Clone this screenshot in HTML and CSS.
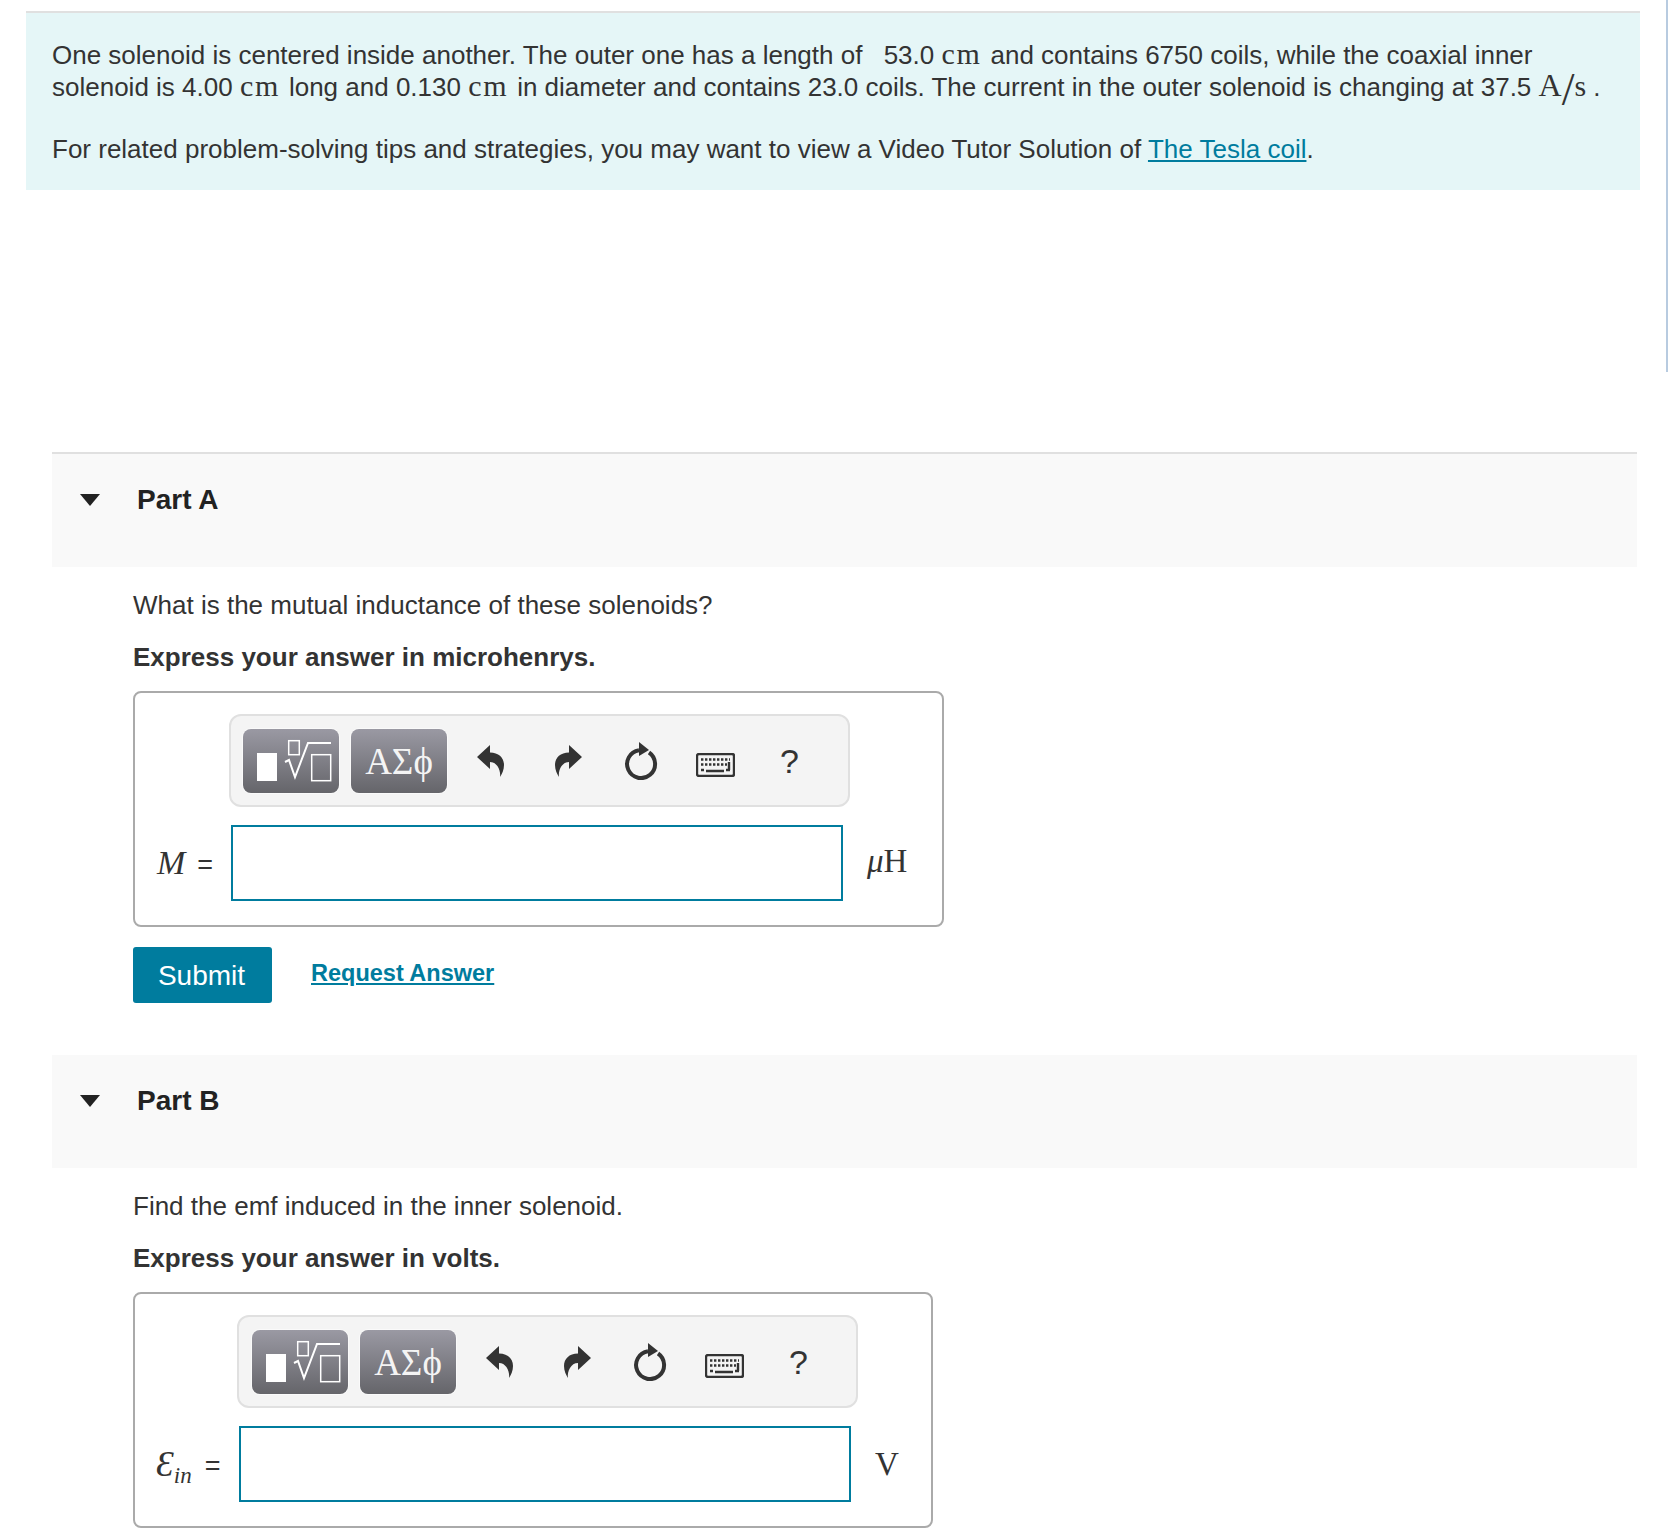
FILE: index.html
```html
<!DOCTYPE html>
<html lang="en">
<head>
<meta charset="utf-8">
<title>Solenoid problem</title>
<link rel="stylesheet" href="styles.css">
</head>
<body>
<div class="scroll-thumb"></div>
<section class="intro">
  <p class="intro-line">One solenoid is centered inside another. The outer one has a length of <span class="gap"></span>53.0 <span class="math">cm</span> and contains 6750 coils, while the coaxial inner<br>solenoid is 4.00 <span class="math">cm</span> long and 0.130 <span class="math">cm</span> in diameter and contains 23.0 coils. The current in the outer solenoid is changing at 37.5 <span class="math math-unit"><span class="math-a">A</span><span class="math-slash">/</span>s</span> .</p>
  <p class="intro-line intro-tip">For related problem-solving tips and strategies, you may want to view a Video Tutor Solution of <a href="#" class="link">The Tesla coil</a>.</p>
</section>

<section class="part part-first">
  <header class="part-head">
    <span class="caret"></span>
    <h2 class="part-title">Part A</h2>
  </header>
  <div class="part-body">
    <p class="question">What is the mutual inductance of these solenoids?</p>
    <p class="express">Express your answer in microhenrys.</p>
    <div class="answer answer-a">
      <div class="toolbar">
        <span class="tool-btn"><svg width="96" height="64" viewBox="0 0 96 64"><rect x="14" y="24" width="20" height="28" fill="#fff"/><rect x="45.7" y="11.7" width="10.6" height="14" fill="none" stroke="#fff" stroke-width="1.5"/><path d="M42 33 L46 31 L52 48 L65 14 H88" fill="none" stroke="#fff" stroke-width="2"/><rect x="68.7" y="25.7" width="19" height="26" fill="none" stroke="#fff" stroke-width="1.5"/></svg></span>
        <span class="tool-btn tool-greek">ΑΣϕ</span>
        <span class="tool-slot"><svg width="28" height="32" viewBox="0 0 28 32"><path d="M0 12 L13 0 V7.5 C22 7.5 27 13 27 20 C27 25 25 29 23 32 C24 25 20 17 13 17 V24 Z" fill="#333"/></svg></span>
        <span class="tool-slot"><svg class="shift" width="28" height="32" viewBox="0 0 28 32"><path d="M28 12 L15 0 V7.5 C6 7.5 1 13 1 20 C1 25 3 29 5 32 C4 25 8 17 15 17 V24 Z" fill="#333"/></svg></span>
        <span class="tool-slot"><svg width="34" height="38" viewBox="0 0 34 38"><path d="M15 8.2 A14 14 0 1 0 25 10.5" fill="none" stroke="#333" stroke-width="4"/><path d="M15 0 L25 8 L15 14 Z" fill="#333"/></svg></span>
        <span class="tool-slot"><svg class="kbd" width="39" height="24" viewBox="0 0 39 24"><rect x="1" y="1" width="37" height="22" rx="2" fill="none" stroke="#333" stroke-width="2.4"/><path d="M5 6.5h29M5 11.5h26" stroke="#333" stroke-width="2.4" stroke-dasharray="2.4 1.6"/><path d="M5 17h3M10 18h18M30 17h4M33 9v8" stroke="#333" stroke-width="2.4"/></svg></span>
        <span class="tool-slot tool-help">?</span>
      </div>
      <div class="label"><span class="var">M</span><span class="eq">=</span></div>
      <input class="field" type="text" aria-label="M">
      <div class="unit"><i>μ</i>H</div>
    </div>
    <div class="actions">
      <button class="submit" type="button">Submit</button>
      <a href="#" class="link request">Request Answer</a>
    </div>
  </div>
</section>

<section class="part part-second">
  <header class="part-head">
    <span class="caret"></span>
    <h2 class="part-title">Part B</h2>
  </header>
  <div class="part-body">
    <p class="question">Find the emf induced in the inner solenoid.</p>
    <p class="express">Express your answer in volts.</p>
    <div class="answer answer-b">
      <div class="toolbar">
        <span class="tool-btn"><svg width="96" height="64" viewBox="0 0 96 64"><rect x="14" y="24" width="20" height="28" fill="#fff"/><rect x="45.7" y="11.7" width="10.6" height="14" fill="none" stroke="#fff" stroke-width="1.5"/><path d="M42 33 L46 31 L52 48 L65 14 H88" fill="none" stroke="#fff" stroke-width="2"/><rect x="68.7" y="25.7" width="19" height="26" fill="none" stroke="#fff" stroke-width="1.5"/></svg></span>
        <span class="tool-btn tool-greek">ΑΣϕ</span>
        <span class="tool-slot"><svg width="28" height="32" viewBox="0 0 28 32"><path d="M0 12 L13 0 V7.5 C22 7.5 27 13 27 20 C27 25 25 29 23 32 C24 25 20 17 13 17 V24 Z" fill="#333"/></svg></span>
        <span class="tool-slot"><svg class="shift" width="28" height="32" viewBox="0 0 28 32"><path d="M28 12 L15 0 V7.5 C6 7.5 1 13 1 20 C1 25 3 29 5 32 C4 25 8 17 15 17 V24 Z" fill="#333"/></svg></span>
        <span class="tool-slot"><svg width="34" height="38" viewBox="0 0 34 38"><path d="M15 8.2 A14 14 0 1 0 25 10.5" fill="none" stroke="#333" stroke-width="4"/><path d="M15 0 L25 8 L15 14 Z" fill="#333"/></svg></span>
        <span class="tool-slot"><svg class="kbd" width="39" height="24" viewBox="0 0 39 24"><rect x="1" y="1" width="37" height="22" rx="2" fill="none" stroke="#333" stroke-width="2.4"/><path d="M5 6.5h29M5 11.5h26" stroke="#333" stroke-width="2.4" stroke-dasharray="2.4 1.6"/><path d="M5 17h3M10 18h18M30 17h4M33 9v8" stroke="#333" stroke-width="2.4"/></svg></span>
        <span class="tool-slot tool-help">?</span>
      </div>
      <div class="label"><span class="var var-script">Ɛ<sub class="sub">in</sub></span><span class="eq">=</span></div>
      <input class="field" type="text" aria-label="E in">
      <div class="unit">V</div>
    </div>
  </div>
</section>
</body>
</html>
```
FILE: styles.css
```css
* { box-sizing: border-box; }
html, body { margin: 0; padding: 0; height: 1534px; overflow: hidden; background: #fff; }
body { font-family: "Liberation Sans", Arial, sans-serif; font-size: 26px; color: #333; position: relative; }
p, h2 { margin: 0; }

.scroll-thumb { position: absolute; top: 0; right: 0; width: 2px; height: 372px; background: #b8cbe0; }

.intro { margin: 11px 28px 0 26px; padding: 26px 26px 25px; background: #e5f6f7; border-top: 2px solid #e0e0e0; }
.intro-line { line-height: 32px; }
.intro-tip { margin-top: 30px; }
.gap { display: inline-block; width: 14px; }
.math { font-family: "Liberation Serif", serif; font-size: 30px; letter-spacing: 1.8px; word-spacing: 0; line-height: 0; margin-right: 1.5px; }
.math-unit { letter-spacing: 0; margin-right: 0; }
.math-a { font-size: 32px; }
.math-slash { font-size: 46px; vertical-align: -9px; }
.link { color: #007c9e; text-decoration: underline; }

.part { margin-left: 52px; width: 1585px; }
.part-first { margin-top: 262px; }
.part-second { margin-top: 52px; }
.part-first .part-head { border-top: 2px solid #e0e0e0; height: 115px; }
.part-second .part-head { height: 113px; }
.part-head { display: flex; align-items: flex-start; background: #f9f9f9; padding: 27px 0 0 28px; }
.caret { width: 0; height: 0; margin-top: 13px; border-left: 10.5px solid transparent; border-right: 10.5px solid transparent; border-top: 12px solid #222; }
.part-title { margin: -1px 0 0 37px; font-size: 28px; line-height: 40px; font-weight: bold; color: #222; }
.part-body { padding-left: 81px; }
.question { margin-top: 20px; line-height: 36px; }
.express { margin-top: 16px; line-height: 36px; font-weight: bold; }

.answer { display: grid; grid-template-columns: 96px 612px 1fr; margin-top: 16px; padding: 21px 0 24px; border: 2px solid #aaa; border-radius: 8px; }
.answer-a { width: 811px; }
.answer-b { width: 800px; grid-template-columns: 104px 612px 1fr; }

.toolbar { grid-column: 2 / 4; margin: 0 0 18px -2px; width: 621px; height: 93px; padding: 13px 0 0 12px; display: flex; align-items: flex-start; background: #f4f4f4; border: 2px solid #e0e0e0; border-radius: 12px; }
.answer-b .toolbar { padding-left: 13px; }
.tool-btn { display: flex; align-items: center; justify-content: center; width: 96px; height: 64px; margin-right: 12px; border-radius: 8px; background: linear-gradient(#9a99a3, #65656a); box-shadow: 0 0 0 1px #fafafa; color: #f4f4f4; }
.tool-greek { font-family: "Liberation Serif", serif; font-size: 37px; }
.tool-slot { display: flex; align-items: center; justify-content: center; width: 75px; height: 64px; color: #333; }
.tool-btn + .tool-slot { margin-left: -6px; }
.tool-help { font-size: 34px; padding: 0 2px 0 0; }
.shift { margin-left: 4px; }
.kbd { margin-top: 8px; }

.label { grid-column: 1; display: flex; align-items: center; padding-left: 22px; font-family: "Liberation Serif", serif; }
.var { font-style: italic; font-size: 34px; }
.var-script { font-size: 36px; margin-left: -1px; line-height: 1; }
.sub { font-size: 23px; vertical-align: -7px; line-height: 0; }
.eq { margin: 5px 0 0 12px; font-family: "Liberation Sans", sans-serif; font-size: 27px; }
.var-script + .eq { margin-left: 13px; }
.field { grid-column: 2; height: 76px; width: 612px; border: 2px solid #007c9e; background: #fff; border-radius: 0; outline: none; }
.unit { grid-column: 3; display: flex; align-items: center; padding: 0 0 4px 24px; font-family: "Liberation Serif", serif; font-size: 33px; color: #333; }
.answer-b .unit { padding-bottom: 0; }

.actions { display: flex; align-items: center; margin-top: 20px; }
.submit { width: 139px; height: 56px; padding: 2px 2px 0 0; border: 0; border-radius: 3px; background: #007c9e; color: #fff; font-family: "Liberation Sans", sans-serif; font-size: 28px; }
.request { margin-left: 39px; font-size: 23.5px; font-weight: bold; margin-top: -4px; }
```
